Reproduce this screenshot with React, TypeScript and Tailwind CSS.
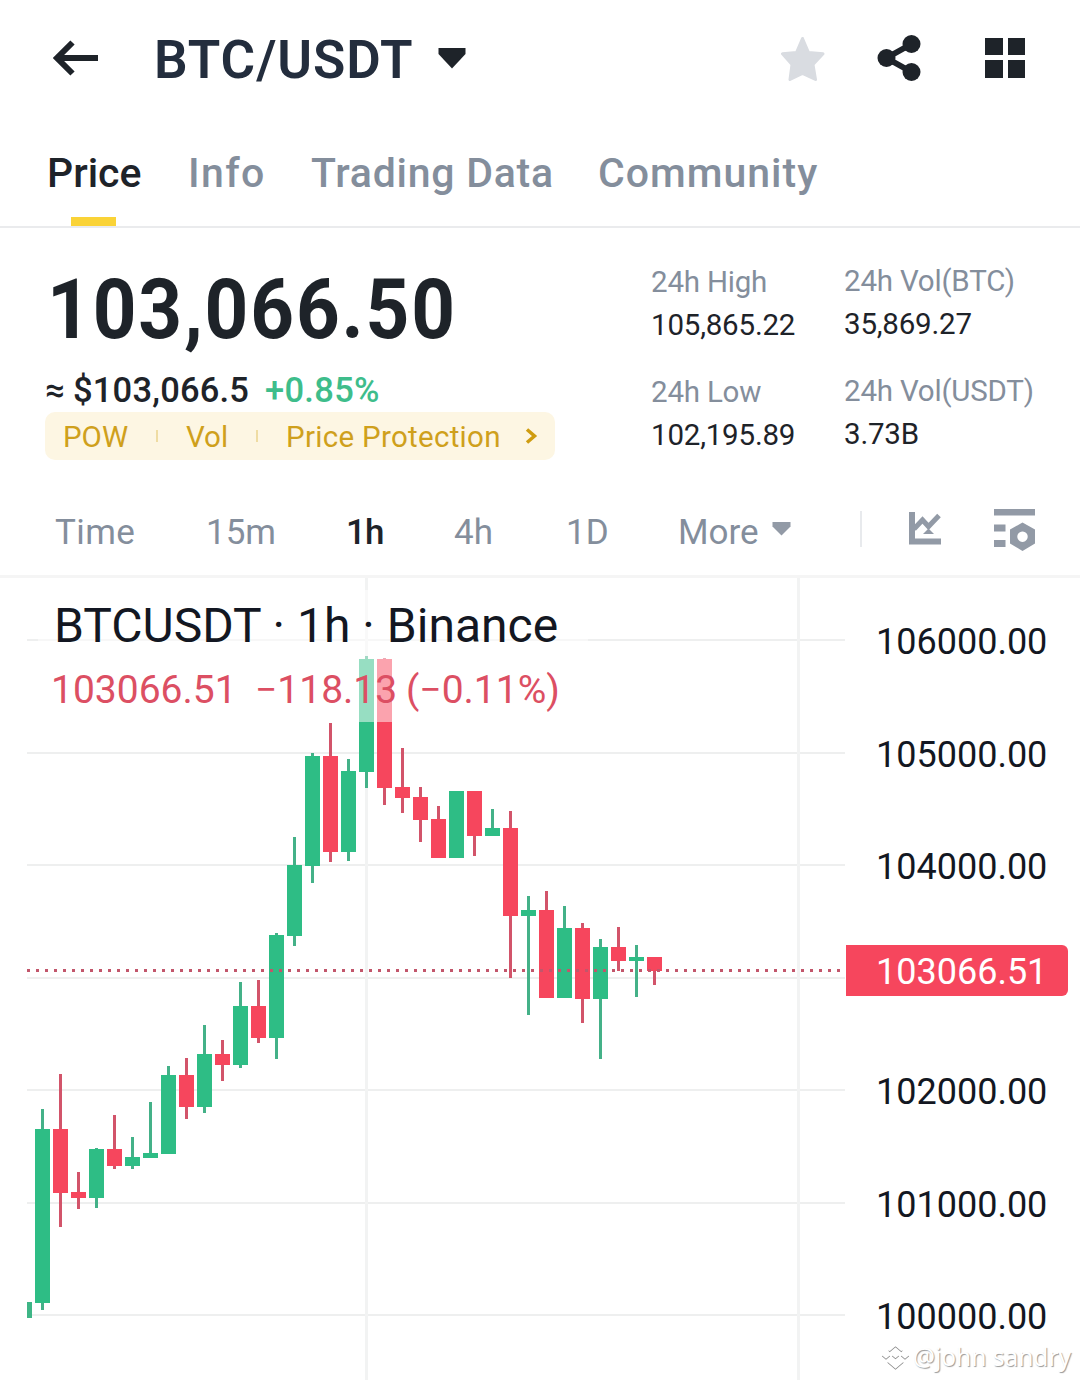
import type { FC } from "react";
import React from "react";

type Candle = [up: boolean, high: number, top: number, bottom: number, low: number];

const candles: Candle[] = [
  [true, 1109, 1129, 1303, 1310],
  [false, 1074, 1129, 1193, 1227],
  [false, 1172, 1192, 1198, 1209],
  [true, 1148, 1149, 1198, 1208],
  [false, 1115, 1149, 1166, 1169],
  [true, 1137, 1157, 1166, 1169],
  [true, 1102, 1153, 1158, 1158],
  [true, 1066, 1075, 1154, 1154],
  [false, 1058, 1075, 1107, 1119],
  [true, 1025, 1054, 1107, 1113],
  [false, 1040, 1054, 1065, 1081],
  [true, 982, 1006, 1065, 1068],
  [false, 980, 1006, 1038, 1043],
  [true, 933, 935, 1038, 1059],
  [true, 837, 865, 936, 946],
  [true, 753, 756, 866, 883],
  [false, 723, 756, 852, 862],
  [true, 759, 771, 852, 861],
  [true, 656, 659, 772, 788],
  [false, 658, 659, 788, 805],
  [false, 748, 787, 798, 813],
  [false, 787, 797, 820, 842],
  [false, 806, 819, 858, 858],
  [true, 791, 791, 858, 858],
  [false, 791, 791, 836, 856],
  [true, 809, 828, 836, 836],
  [false, 811, 828, 916, 978],
  [true, 896, 910, 916, 1015],
  [false, 891, 910, 998, 998],
  [true, 906, 928, 998, 998],
  [false, 923, 928, 999, 1023],
  [true, 939, 947, 999, 1059],
  [false, 927, 947, 961, 971],
  [true, 945, 957, 961, 997],
  [false, 957, 957, 971, 985],
];

const gridRows = [639, 752, 864, 977, 1089, 1202, 1314];

const axisLabels = [
  "106000.00",
  "105000.00",
  "104000.00",
  "",
  "102000.00",
  "101000.00",
  "100000.00",
];

const tabs = [
  { name: "Price", className: "w-[141px] text-[#1e2329]" },
  { name: "Info", className: "w-[123px] tracking-[1.4px] text-[#848e9c]" },
  { name: "Trading Data", className: "w-[287px] tracking-[0.75px] text-[#848e9c]" },
  { name: "Community", className: "tracking-[1px] text-[#848e9c]" },
];

const intervals = [
  { name: "Time", className: "w-[151px] tracking-[0.4px] text-[#848e9c]" },
  { name: "15m", className: "w-[140px] text-[#848e9c]" },
  { name: "1h", className: "w-[108px] font-medium tracking-[-1px] text-[#1e2329]" },
  { name: "4h", className: "w-[112px] text-[#848e9c]" },
  { name: "1D", className: "w-[112px] text-[#848e9c]" },
  { name: "More", className: "w-[94px] text-[#848e9c]" },
];

const stats = [
  [
    { label: "24h High", value: "105,865.22" },
    { label: "24h Low", value: "102,195.89" },
  ],
  [
    { label: "24h Vol(BTC)", value: "35,869.27" },
    { label: "24h Vol(USDT)", value: "3.73B" },
  ],
];

const Header: FC = () => (
  <header className="flex h-[116px] items-center pl-[52px] text-[#1e2329]">
    <svg className="h-9 w-[47px]" viewBox="0 0 47 36" fill="none" stroke="currentColor" strokeWidth="6">
      <path d="M20.500 2.500 5 18l15.500 15.500M5 18h41" />
    </svg>
    <h1 className="ml-[55px] w-[284px] whitespace-nowrap pt-[5px] text-[53px] font-semibold leading-none tracking-[0.9px] text-[#232d3d]">
      BTC/USDT
    </h1>
    <svg className="h-[22px] w-[28px]" viewBox="0 0 28 22" fill="currentColor">
      <path d="M0.500 1h27v6L14 21.500 0.500 7z" />
    </svg>
    <svg className="ml-[315px] mt-px h-[46px] w-[45px]" viewBox="0 0 45 46" fill="#d9dce1" stroke="#d9dce1" strokeWidth="3" strokeLinejoin="round">
      <path d="M21.500 2.500 27.500 16.500 42 17.800 32 28.500 34.500 43.500 21.500 37.300 9 43.500l2-15L1.500 17.800 15.500 16.500z" />
    </svg>
    <svg className="ml-[51px] h-[46px] w-[45px]" viewBox="0 0 45 46" fill="currentColor">
      <path d="M34.500 9 9.500 23l25 14" fill="none" stroke="currentColor" strokeWidth="6" />
      <circle cx="34.500" cy="9" r="9" />
      <circle cx="9.500" cy="23" r="9" />
      <circle cx="34.500" cy="37" r="9" />
    </svg>
    <div className="ml-[63px] grid grid-cols-2 gap-[5px]">
      <i className="h-[17px] w-[18px] bg-[#1e2329]" />
      <i className="h-[17px] w-[17px] bg-[#1e2329]" />
      <i className="h-[18px] w-[18px] bg-[#1e2329]" />
      <i className="h-[18px] w-[17px] bg-[#1e2329]" />
    </div>
  </header>
);

const Tabs: FC = () => (
  <nav className="h-[112px] border-b-2 border-[#eaebed]">
    <div className="flex h-[101px] pl-[47px] pt-[37px] text-[41px] font-medium leading-none">
      {tabs.map((tab) => (
        <span key={tab.name} className={`whitespace-nowrap ${tab.className}`}>
          {tab.name}
        </span>
      ))}
    </div>
    <div className="ml-[71px] h-[9px] w-[45px] bg-[#fad337]" />
  </nav>
);

const Summary: FC = () => (
  <section className="flex h-[262px]">
    <div className="w-[651px] pl-[46px]">
      <div className="ml-px mt-[40px] origin-left scale-x-[.92] whitespace-nowrap text-[83px] font-bold leading-none tracking-[2px] text-[#1e2329]">
        103,066.50
      </div>
      <div className="mt-[22px] flex h-[35px] items-center whitespace-nowrap text-[34.500px] font-medium leading-none">
        <span className="-ml-px w-[28px] text-[#1e2329]">≈</span>
        <span className="w-[192px] tracking-[0.2px] text-[#1e2329]">$103,066.5</span>
        <span className="tracking-[0.3px] text-[#3ebd8b]">+0.85%</span>
      </div>
      <div className="-ml-px mt-[4px] flex h-[48px] w-[510px] items-center whitespace-nowrap rounded-[10px] bg-[#fdf6e3] pl-[18px] text-[29.500px] leading-none text-[#cfa01c]">
        <span className="w-[93px] pt-[3px]">POW</span>
        <i className="h-3 w-[2px] bg-[#efdca3]" />
        <span className="ml-[28px] w-[70px] pt-[3px]">Vol</span>
        <i className="h-3 w-[2px] bg-[#efdca3]" />
        <span className="ml-[28px] w-[239px] pt-[3px] tracking-[0.3px]">Price Protection</span>
        <svg className="h-4 w-[13px]" viewBox="0 0 13 16" fill="none" stroke="#cf9c10" strokeWidth="3.500">
          <path d="M2 1.500 9.500 8 2 14.500" />
        </svg>
      </div>
    </div>
    {stats.map((column, i) => (
      <div key={column[0].label} className={i === 0 ? "w-[193px] pt-[40px]" : "pt-[39px]"}>
        {column.map((stat) => (
          <dl key={stat.label} className="h-[110px] whitespace-nowrap text-[29.500px] leading-none tracking-[-0.2px]">
            <dt className="h-[43px] text-[#848e9c]">{stat.label}</dt>
            <dd className="text-[#1e2329]">{stat.value}</dd>
          </dl>
        ))}
      </div>
    ))}
  </section>
);

const Intervals: FC = () => (
  <div className="flex h-[88px] items-center border-b-[3px] border-[#f5f5f5] pl-[55px] text-[#929aa6]">
    {intervals.map((interval) => (
      <span key={interval.name} className={`whitespace-nowrap text-[35px] leading-none ${interval.className}`}>
        {interval.name}
      </span>
    ))}
    <svg className="mb-2 h-[14px] w-[19px]" viewBox="0 0 19 14" fill="currentColor">
      <path d="M0.500 0h18v4.500L9.500 13.500 0.500 4.500z" />
    </svg>
    <i className="mb-2 ml-[69px] h-9 w-[2px] bg-[#e8eaed]" />
    <svg className="mb-2 ml-[47px] h-[33px] w-[33px]" viewBox="0 0 33 33" fill="currentColor">
      <path d="M0 0h6v26.500h26V32.500H0z" />
      <path d="M5 17 13.500 8l6 6.500L30 3.500" fill="none" stroke="currentColor" strokeWidth="5" />
      <path d="M19.500 16.500 25 22H14z" />
    </svg>
    <svg className="mb-[5px] ml-[52px] h-[42px] w-[41px]" viewBox="0 0 41 42" fill="currentColor">
      <path d="M0 0h41v6.500H0zM0 15.500h11.500v7H0zM0 31h11.500v7H0z" />
      <path d="M28.500 13.500 41 20.500v14L28.500 42 16 34.500v-14zM28.500 22.500a5.200 5.200 0 1 0 0.010 0z" fillRule="evenodd" />
    </svg>
  </div>
);

const CandleChart: FC = () => (
  <svg className="block h-[802px] w-[846px]" viewBox="0 578 846 802" shapeRendering="crispEdges">
    {gridRows.map((y) => (
      <rect key={y} x="27" y={y} width="818" height="2" fill="#eeefef" />
    ))}
    <rect x="365" y="578" width="3" height="802" fill="#f2f3f3" />
    <rect x="797" y="578" width="3" height="802" fill="#f2f3f3" />
    <rect x="27" y="1302" width="5" height="16" fill="#3eb586" />
    {candles.map(([up, high, top, bottom, low], i) => (
      <g key={i}>
        <rect x={41 + i * 18} y={high} width="3" height={low - high} fill={up ? "#44b188" : "#d2546a"} />
        <rect x={35 + i * 18} y={top} width="15" height={bottom - top} fill={up ? "#2ebd85" : "#f6465d"} />
      </g>
    ))}
    <path d="M27 970.500H843" stroke="#c2566b" strokeWidth="3" strokeDasharray="3 6" />
  </svg>
);

const PriceAxis: FC = () => (
  <div className="relative flex-1 pt-[8px] text-[36px] leading-none text-[#131722]">
    {axisLabels.map((label, i) => (
      <div key={i} className="flex h-[112.500px] items-center pl-[30px]">
        {label}
      </div>
    ))}
    <div className="absolute left-0 top-[367px] flex h-[51px] w-[222px] items-center rounded-r-md bg-[#f6465d] pl-[30px] pt-[3px] text-white">
      103066.51
    </div>
  </div>
);

const Legend: FC = () => (
  <div className="absolute left-[38px] top-[12px] h-[132px] w-[550px] whitespace-nowrap bg-white/50 leading-none">
    <div className="pl-[16px] pt-[12px] text-[48px] text-[#131722]">BTCUSDT · 1h · Binance</div>
    <div className="mt-[21px] flex pl-[13px] text-[39px] text-[#dc4f63]">
      <span className="w-[204px]">103066.51</span>
      <span className="w-[151px]">−118.13</span>
      <span>(−0.11%)</span>
    </div>
  </div>
);

const Watermark: FC = () => (
  <div className="absolute bottom-[10px] right-[9px] flex items-center text-white [text-shadow:1px_1px_1px_#999]">
    <svg className="mr-[3px] h-[26px] w-[29px] drop-shadow-[0.500px_1px_0.500px_#888]" viewBox="0 0 29 26" fill="none" stroke="white" strokeWidth="2">
      <path d="M8 6.500 14.500 1l6.500 5.500M1.500 10.500l3.500 3 3.500-3M20.500 10.500l3.500 3 3.500-3M11.500 10.500l3 2.500 3-2.500M7 17l7.500 6.500L22 17" />
    </svg>
    <span className="font-['Noto_Sans'] text-[24.500px] leading-none">@john sandry</span>
  </div>
);

export default function App() {
  return (
    <main className="relative h-[1380px] w-[1080px] overflow-hidden bg-white font-['Roboto',sans-serif]">
      <Header />
      <Tabs />
      <Summary />
      <Intervals />
      <div className="relative flex h-[802px]">
        <CandleChart />
        <Legend />
        <PriceAxis />
      </div>
      <Watermark />
    </main>
  );
}
